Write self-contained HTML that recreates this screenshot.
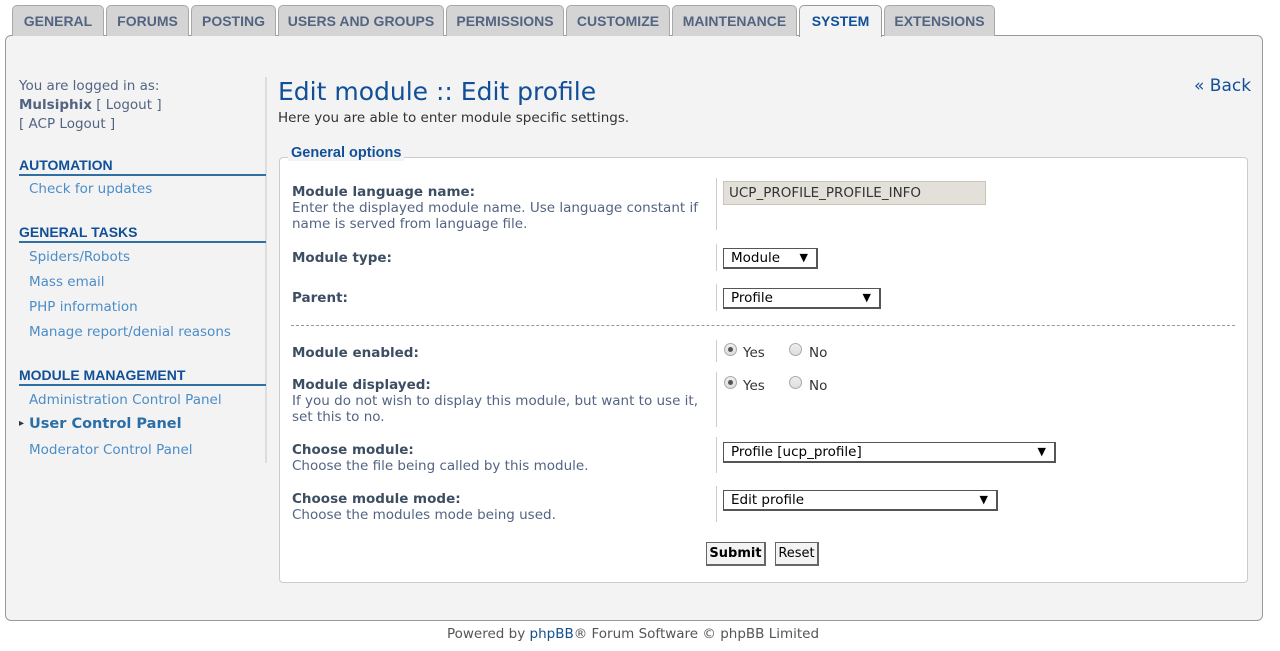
<!DOCTYPE html>
<html><head><meta charset="utf-8"><style>
*{box-sizing:border-box}
body{margin:0;width:1280px;height:651px;background:#fff;font-family:"DejaVu Sans","Liberation Sans",sans-serif;font-size:13.5px;color:#536482;position:relative;overflow:hidden}
.a{position:absolute;white-space:nowrap}
.tab{position:absolute;top:5px;height:31px;background:#d4d4d4;border:1px solid #a8a8a8;border-bottom:none;border-radius:5px 5px 0 0;font-family:"Liberation Sans",sans-serif;font-weight:bold;font-size:14px;color:#536482;text-align:center;line-height:30px}
.panel{position:absolute;left:5px;top:35px;width:1258px;height:586px;background:#f3f3f3;border:1px solid #999;border-radius:6px}
.h{position:absolute;left:19px;width:247px;border-bottom:2px solid #2f6fa1;color:#115098;font-weight:bold;font-family:"Liberation Sans",sans-serif;font-size:14px;padding-bottom:1px}
.lk{position:absolute;left:29px;color:#4b8dc7;white-space:nowrap}
.lab{position:absolute;left:292px;color:#333;line-height:16px;white-space:nowrap}
.lab b{color:#3d4e63}
.lab span{color:#536482}
.vl{position:absolute;left:716px;width:1px;background:#ccc}
.sel{position:absolute;height:21px;border:2px solid #555;border-width:1px 2px 2px 1px;background:#fff;color:#000;padding-left:7px;line-height:18px;font-size:13.5px}
.sel i{position:absolute;right:8px;top:0;font-style:normal;font-size:11px}
.r{position:absolute;width:13px;height:13px;border-radius:50%;border:1px solid #aaa;background:linear-gradient(#eee,#ddd)}
.r.on::after{content:"";position:absolute;left:3px;top:3px;width:5px;height:5px;border-radius:50%;background:#555}
.t{position:absolute;color:#333}
</style></head><body>
<div class="panel"></div>
<div class="tab" style="left:12px;width:92px">GENERAL</div>
<div class="tab" style="left:106px;width:83px">FORUMS</div>
<div class="tab" style="left:191px;width:85px">POSTING</div>
<div class="tab" style="left:278px;width:166px">USERS AND GROUPS</div>
<div class="tab" style="left:446px;width:118px">PERMISSIONS</div>
<div class="tab" style="left:566px;width:104px">CUSTOMIZE</div>
<div class="tab" style="left:672px;width:125px">MAINTENANCE</div>
<div class="tab" style="left:799px;width:83px;height:32px;background:#f3f3f3;color:#115098;border-color:#999">SYSTEM</div>
<div class="tab" style="left:884px;width:111px">EXTENSIONS</div>

<div class="a" style="left:19px;top:77px;line-height:19px">You are logged in as:<br><b style="color:#536482">Mulsiphix</b> [ Logout ]<br>[ ACP Logout ]</div>
<div style="position:absolute;left:265px;top:77px;width:2px;height:386px;background:#ddd"></div>
<div class="h" style="top:157px">AUTOMATION</div>
<div class="lk" style="top:181px">Check for updates</div>
<div class="h" style="top:224px">GENERAL TASKS</div>
<div class="lk" style="top:249px">Spiders/Robots</div>
<div class="lk" style="top:274px">Mass email</div>
<div class="lk" style="top:299px">PHP information</div>
<div class="lk" style="top:324px">Manage report/denial reasons</div>
<div class="h" style="top:367px">MODULE MANAGEMENT</div>
<div class="lk" style="top:392px">Administration Control Panel</div>
<div class="a" style="left:19px;top:418px;color:#333;font-size:10px">&#9656;</div>
<div class="lk" style="top:416px;font-weight:bold;color:#2a6ea8;font-size:14.5px">User Control Panel</div>
<div class="lk" style="top:442px">Moderator Control Panel</div>

<div class="a" style="left:278px;top:77px;font-size:25px;color:#115098">Edit module :: Edit profile</div>
<div class="a" style="left:278px;top:110px;color:#333">Here you are able to enter module specific settings.</div>
<div class="a" style="left:1194px;top:76px;font-size:17px;color:#115098">« Back</div>

<div style="position:absolute;left:279px;top:157px;width:969px;height:426px;background:#fff;border:1px solid #ccc;border-radius:4px"></div>
<div class="a" style="left:288px;top:145px;background:#f3f3f3;padding:0 3px;color:#115098;font-weight:bold;font-family:'Liberation Sans',sans-serif;font-size:14.5px">General options</div>

<div class="lab" style="top:184px"><b>Module language name:</b><br><span>Enter the displayed module name. Use language constant if<br>name is served from language file.</span></div>
<div class="vl" style="top:178px;height:52px"></div>
<div class="a" style="left:723px;top:181px;width:263px;height:24px;background:#e3e0da;border:1px solid #c9c4b8;color:#333;padding:3px 5px">UCP_PROFILE_PROFILE_INFO</div>

<div class="lab" style="top:250px"><b>Module type:</b></div>
<div class="vl" style="top:244px;height:27px"></div>
<div class="sel" style="left:723px;top:248px;width:95px">Module<i>▼</i></div>

<div class="lab" style="top:290px"><b>Parent:</b></div>
<div class="vl" style="top:284px;height:27px"></div>
<div class="sel" style="left:723px;top:288px;width:158px">Profile<i>▼</i></div>

<div style="position:absolute;left:291px;top:325px;width:944px;border-top:1px dashed #999"></div>

<div class="lab" style="top:345px"><b>Module enabled:</b></div>
<div class="vl" style="top:340px;height:22px"></div>
<div class="r on" style="left:724px;top:343px"></div><div class="t" style="left:743px;top:345px">Yes</div>
<div class="r" style="left:789px;top:343px"></div><div class="t" style="left:809px;top:345px">No</div>

<div class="lab" style="top:377px"><b>Module displayed:</b><br><span>If you do not wish to display this module, but want to use it,<br>set this to no.</span></div>
<div class="vl" style="top:372px;height:55px"></div>
<div class="r on" style="left:724px;top:376px"></div><div class="t" style="left:743px;top:378px">Yes</div>
<div class="r" style="left:789px;top:376px"></div><div class="t" style="left:809px;top:378px">No</div>

<div class="lab" style="top:442px"><b>Choose module:</b><br><span>Choose the file being called by this module.</span></div>
<div class="vl" style="top:437px;height:36px"></div>
<div class="sel" style="left:723px;top:442px;width:333px">Profile [ucp_profile]<i>▼</i></div>

<div class="lab" style="top:491px"><b>Choose module mode:</b><br><span>Choose the modules mode being used.</span></div>
<div class="vl" style="top:486px;height:36px"></div>
<div class="sel" style="left:723px;top:490px;width:275px">Edit profile<i>▼</i></div>

<div class="a" style="left:706px;top:542px;width:60px;height:24px;border:1px solid #666;border-width:1px 2px 2px 1px;background:#f3f3f3;color:#000;font-weight:bold;text-align:center;line-height:21px;font-size:13px">Submit</div>
<div class="a" style="left:775px;top:542px;width:44px;height:24px;border:1px solid #666;border-width:1px 2px 2px 1px;background:#f3f3f3;color:#000;text-align:center;line-height:21px;font-size:13px">Reset</div>

<div class="a" style="left:0;width:1266px;top:626px;text-align:center;color:#555">Powered by <span style="color:#105289">phpBB</span>® Forum Software © phpBB Limited</div>
</body></html>
